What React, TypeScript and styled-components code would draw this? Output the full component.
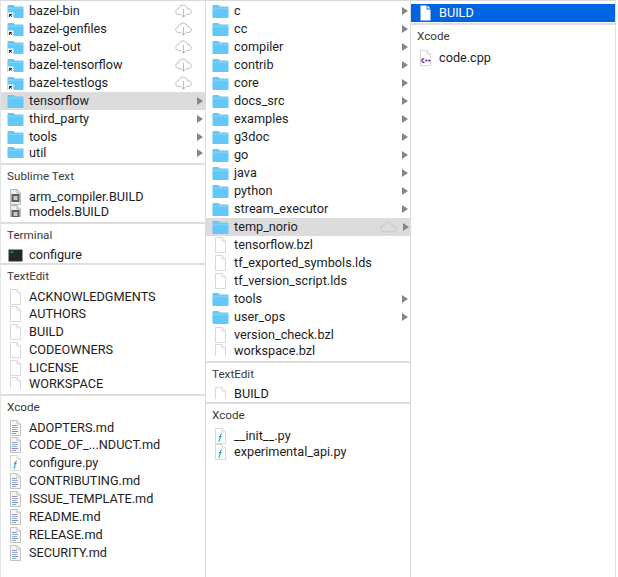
import { createGlobalStyle } from "styled-components";
import styled from "styled-components";

const GlobalStyle = createGlobalStyle`
  html, body {
    margin: 0;
    padding: 0;
    background: #ffffff;
  }
  body {
    font-family: Roboto, "Liberation Sans", Arial, sans-serif;
    font-size: 13px;
    color: #1d1d1f;
  }
`;

const Browser = styled.div`
  width: 616px;
  height: 577px;
  display: flex;
  box-sizing: border-box;
  border-top: 1px solid #d8d8d8;
  border-left: 1px solid #e4e4e4;
  border-right: 1px solid #e0e0e0;
  overflow: hidden;
`;

const Column = styled.div<{ $width: number; $last?: boolean }>`
  width: ${(p) => p.$width}px;
  flex: none;
  box-sizing: border-box;
  padding-top: 1px;
  border-right: ${(p) => (p.$last ? "none" : "1px solid #dcdcdc")};
`;

const Section = styled.div<{ $top: number; $bottom: number; $end?: boolean }>`
  padding-top: ${(p) => p.$top}px;
  padding-bottom: ${(p) => p.$bottom}px;
  border-bottom: ${(p) => (p.$end ? "none" : "2px solid #dedede")};
`;

const Heading = styled.div<{ $gap: number }>`
  height: 18px;
  padding: 2px 0 0 6px;
  margin-bottom: ${(p) => p.$gap}px;
  line-height: 18px;
  font-size: 11.7px;
  color: #3a3a3a;
`;

const Row = styled.div<{ $height: number; $state?: "open" | "selected" }>`
  height: ${(p) => p.$height}px;
  display: flex;
  align-items: flex-start;
  background: ${(p) =>
    p.$state === "open" ? "#dcdcdc" : p.$state === "selected" ? "#0064e1" : "transparent"};
  color: ${(p) => (p.$state === "selected" ? "#ffffff" : "inherit")};
`;

const IconSlot = styled.div<{ $clip?: boolean }>`
  width: 17px;
  height: ${(p) => (p.$clip ? "12px" : "18px")};
  margin: ${(p) => (p.$clip ? "2px 5px 0 6px" : "0 5px 0 6px")};
  flex: none;
  display: flex;
  align-items: ${(p) => (p.$clip ? "flex-start" : "center")};
  justify-content: center;
  overflow: hidden;
`;

const Name = styled.span`
  flex: 1;
  min-width: 0;
  line-height: 18px;
  font-size: 12.7px;
  white-space: nowrap;
`;

const Trailing = styled.div`
  width: 30px;
  height: 18px;
  padding-left: 3px;
  flex: none;
  display: flex;
  align-items: center;
  justify-content: flex-start;
`;

const Arrow = styled.div<{ $afterCloud?: boolean }>`
  width: 0;
  height: 0;
  margin-left: ${(p) => (p.$afterCloud ? "6px" : "22px")};
  border-left: 6px solid #858585;
  border-top: 4px solid transparent;
  border-bottom: 4px solid transparent;
`;

const Glyph = styled.svg`
  flex: none;
`;

const FolderIcon = ({ alias }: { alias?: boolean }) => (
  <Glyph width="17" height="15" viewBox="0 0 17 15">
    <path d="M0.5 2.2C0.5 1.3 1 1 1.8 1H6c.6 0 .9.2 1.2.6l.6.9H15.4c.7 0 1.1.4 1.1 1.1v9.3c0 .7-.4 1.1-1.1 1.1H1.6c-.7 0-1.1-.4-1.1-1.1z" fill="#62c8f8" />
    <path d="M0.5 4.2h16" stroke="#96dcfb" strokeWidth="0.8" />
    {alias && (
      <g>
        <rect x="1" y="8.5" width="5.5" height="5.5" fill="#ffffff" />
        <path d="M2.4 13V10.4H5M2.6 10.6l2.4 2" stroke="#222222" strokeWidth="1" fill="none" />
      </g>
    )}
  </Glyph>
);

const Sheet = ({ fill = "#ffffff", stroke = "#cfcfcf" }: { fill?: string; stroke?: string }) => (
  <path d="M1.5 0.5H8L11.5 4V15.5H1.5z M8 0.5V4H11.5" fill={fill} stroke={stroke} strokeWidth="0.8" />
);

const DocIcon = ({ light }: { light?: boolean }) => (
  <Glyph width="13" height="16" viewBox="0 0 13 16">
    {light ? <path d="M1.5 0.5H7.6V4.4H11.5V15.5H1.5z M8.4 0.5L11.5 3.6H8.4z" fill="#ffffff" /> : <Sheet />}
  </Glyph>
);

const MarkdownIcon = () => (
  <Glyph width="13" height="16" viewBox="0 0 13 16">
    <Sheet fill="#f6f6f6" stroke="#b4b4b4" />
    <path d="M3 5.5h5" stroke="#8a8ea8" strokeWidth="0.9" />
    <path d="M3 7.5h6" stroke="#cc84e0" strokeWidth="0.9" />
    <path d="M3 9.5h5" stroke="#4cc4e0" strokeWidth="0.9" />
    <path d="M3 11.5h6" stroke="#6a80d8" strokeWidth="0.9" />
    <path d="M3 13.5h4" stroke="#9a9a9a" strokeWidth="0.9" />
  </Glyph>
);

const PythonIcon = () => (
  <Glyph width="13" height="16" viewBox="0 0 13 16">
    <Sheet />
    <path d="M8 6.2C7 6 6.6 6.6 6.4 7.6L5.6 12.4C5.4 13.2 5 13.4 4.2 13.2M4.8 8.6H7.6" stroke="#18a4ee" strokeWidth="1.1" fill="none" />
  </Glyph>
);

const CppIcon = () => (
  <Glyph width="13" height="16" viewBox="0 0 13 16">
    <Sheet />
    <path d="M5.4 9.2C4.7 8.5 2.8 8.6 2.8 10.6S4.7 12.7 5.4 12" stroke="#5a1ea0" strokeWidth="1.1" fill="none" />
    <path d="M6 10.6h2.6M7.3 9.4v2.4M9 10.6h2.6M10.3 9.4v2.4" stroke="#5a1ea0" strokeWidth="0.8" />
  </Glyph>
);

const SublimeIcon = () => (
  <Glyph width="13" height="16" viewBox="0 0 13 16">
    <Sheet fill="#ececec" stroke="#a8a8a8" />
    <rect x="2.5" y="5" width="8" height="8" fill="#5e5e5e" />
    <rect x="4.5" y="7" width="4" height="4" fill="#c8c8c8" />
  </Glyph>
);

const TerminalIcon = () => (
  <Glyph width="15" height="13" viewBox="0 0 15 13">
    <rect x="0.5" y="0.5" width="14" height="12" rx="1" fill="#1f2a2a" stroke="#9a9a9a" />
    <path d="M2.5 3h3" stroke="#4fc45a" strokeWidth="1" />
  </Glyph>
);

const CloudDownload = () => (
  <Glyph width="17" height="14" viewBox="0 0 17 14">
    <path d="M5.5 10.5H4C2 10.5 .8 9.2 .8 7.6S2 4.9 3.6 4.8C4 2.6 5.9 1 8 1c2.3 0 4.1 1.6 4.5 3.6 2 0 3.7 1.2 3.7 3s-1.4 2.9-3.3 2.9H11.5" fill="none" stroke="#b2b2b2" strokeWidth="0.9" />
    <path d="M8.5 5v8M6 10.5l2.5 2.8 2.5-2.8" fill="none" stroke="#b2b2b2" strokeWidth="0.9" />
  </Glyph>
);

const CloudDashed = () => (
  <Glyph width="17" height="12" viewBox="0 0 17 12">
    <path d="M4 10.8C2 10.8 .8 9.4 .8 7.8S2 5.1 3.6 5C4 2.8 5.9 1.2 8 1.2c2.3 0 4.1 1.6 4.5 3.6 2 0 3.7 1.2 3.7 3s-1.4 3-3.3 3z" fill="none" stroke="#b8b8b8" strokeWidth="0.9" strokeDasharray="1.4 1" />
  </Glyph>
);

type Kind = "folder" | "alias" | "doc" | "md" | "py" | "cpp" | "sublime" | "terminal" | "sheet";

type Item = {
  name: string;
  kind: Kind;
  height?: number;
  state?: "open" | "selected";
  cloud?: "download" | "dashed";
  arrow?: boolean;
  clip?: boolean;
};

type Group = { title?: string; gap?: number; top?: number; bottom?: number; items: Item[] };

const renderIcon = (kind: Kind) => {
  switch (kind) {
    case "folder":
      return <FolderIcon />;
    case "alias":
      return <FolderIcon alias />;
    case "doc":
      return <DocIcon />;
    case "sheet":
      return <DocIcon light />;
    case "md":
      return <MarkdownIcon />;
    case "py":
      return <PythonIcon />;
    case "cpp":
      return <CppIcon />;
    case "sublime":
      return <SublimeIcon />;
    case "terminal":
      return <TerminalIcon />;
  }
};

const folder = (name: string, extra: Partial<Item> = {}): Item => ({
  name,
  kind: "folder",
  arrow: true,
  ...extra,
});

const alias = (name: string): Item => ({ name, kind: "alias", cloud: "download" });

const file = (name: string, kind: Kind, extra: Partial<Item> = {}): Item => ({ name, kind, ...extra });

const firstColumn: Group[] = [
  {
    items: [
      alias("bazel-bin"),
      alias("bazel-genfiles"),
      alias("bazel-out"),
      alias("bazel-tensorflow"),
      alias("bazel-testlogs"),
      folder("tensorflow", { state: "open" }),
      folder("third_party"),
      folder("tools", { height: 16 }),
      folder("util", { clip: true }),
    ],
  },
  {
    title: "Sublime Text",
    items: [
      file("arm_compiler.BUILD", "sublime", { height: 15 }),
      file("models.BUILD", "sublime", { clip: true }),
    ],
  },
  {
    title: "Terminal",
    gap: 2,
    bottom: 0,
    items: [file("configure", "terminal", { height: 17 })],
  },
  {
    title: "TextEdit",
    items: [
      file("ACKNOWLEDGMENTS", "doc", { height: 17 }),
      file("AUTHORS", "doc"),
      file("BUILD", "doc"),
      file("CODEOWNERS", "doc"),
      file("LICENSE", "doc", { height: 16 }),
      file("WORKSPACE", "doc", { clip: true }),
    ],
  },
  {
    title: "Xcode",
    items: [
      file("ADOPTERS.md", "md", { height: 17 }),
      file("CODE_OF_...NDUCT.md", "md"),
      file("configure.py", "py"),
      file("CONTRIBUTING.md", "md"),
      file("ISSUE_TEMPLATE.md", "md"),
      file("README.md", "md"),
      file("RELEASE.md", "md"),
      file("SECURITY.md", "md"),
    ],
  },
];

const secondColumn: Group[] = [
  {
    items: [
      folder("c"),
      folder("cc"),
      folder("compiler"),
      folder("contrib"),
      folder("core"),
      folder("docs_src"),
      folder("examples"),
      folder("g3doc"),
      folder("go"),
      folder("java"),
      folder("python"),
      folder("stream_executor"),
      folder("temp_norio", { state: "open", cloud: "dashed" }),
      file("tensorflow.bzl", "doc"),
      file("tf_exported_symbols.lds", "doc"),
      file("tf_version_script.lds", "doc"),
      folder("tools"),
      folder("user_ops"),
      file("version_check.bzl", "doc", { height: 16 }),
      file("workspace.bzl", "doc", { clip: true }),
    ],
  },
  {
    title: "TextEdit",
    gap: 2,
    bottom: 0,
    items: [file("BUILD", "doc", { height: 17, clip: true })],
  },
  {
    title: "Xcode",
    items: [file("__init__.py", "py", { height: 16 }), file("experimental_api.py", "py")],
  },
];

const thirdColumn: Group[] = [
  { top: 2, items: [{ name: "BUILD", kind: "sheet", state: "selected" }] },
  { title: "Xcode", gap: 4, items: [file("code.cpp", "cpp")] },
];

const ColumnView = ({ groups, width, last }: { groups: Group[]; width: number; last?: boolean }) => (
  <Column $width={width} $last={last}>
    {groups.map((group, index) => (
      <Section
        key={index}
        $top={group.top ?? 0}
        $bottom={group.bottom ?? 1}
        $end={index === groups.length - 1}
      >
        {group.title && <Heading $gap={group.gap ?? 3}>{group.title}</Heading>}
        {group.items.map((item) => (
          <Row key={item.name} $height={item.height ?? 18} $state={item.state}>
            <IconSlot $clip={item.clip}>{renderIcon(item.kind)}</IconSlot>
            <Name>{item.name}</Name>
            <Trailing>
              {item.cloud === "download" && <CloudDownload />}
              {item.cloud === "dashed" && <CloudDashed />}
              {item.arrow && <Arrow $afterCloud={item.cloud === "dashed"} />}
            </Trailing>
          </Row>
        ))}
      </Section>
    ))}
  </Column>
);

export default function App() {
  return (
    <>
      <GlobalStyle />
      <Browser>
        <ColumnView groups={firstColumn} width={205} />
        <ColumnView groups={secondColumn} width={205} />
        <ColumnView groups={thirdColumn} width={204} last />
      </Browser>
    </>
  );
}
